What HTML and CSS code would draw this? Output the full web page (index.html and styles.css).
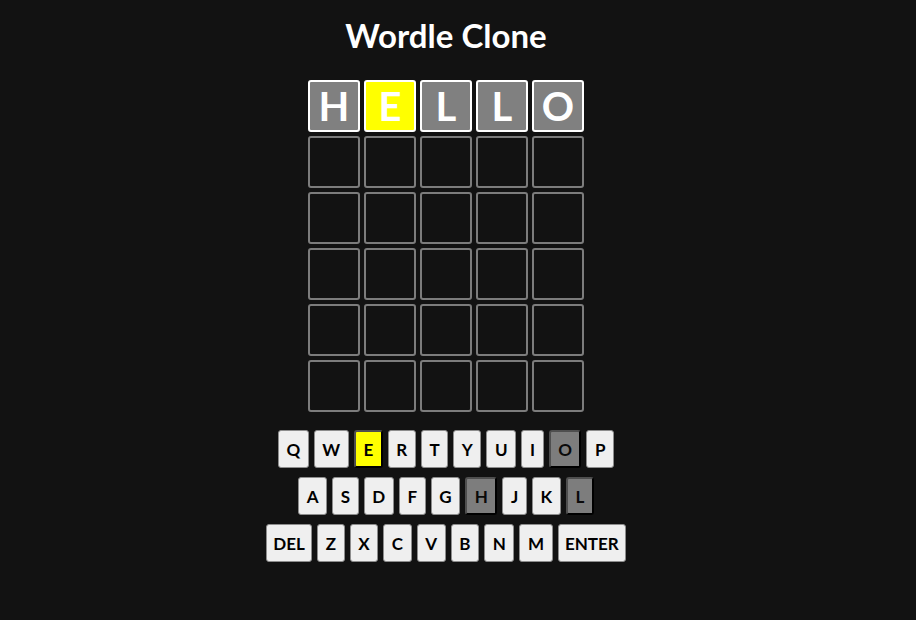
FILE: index.html
```html
<!DOCTYPE html>
<html lang="en">
<head>
<meta charset="utf-8">
<title>Wordle Clone</title>
<link rel="stylesheet" href="styles.css">
</head>
<body>
<main class="app">
  <h1 class="title">Wordle Clone</h1>

  <section class="board">
    <div class="row">
      <div class="tile tile-absent">H</div>
      <div class="tile tile-present">E</div>
      <div class="tile tile-absent">L</div>
      <div class="tile tile-absent">L</div>
      <div class="tile tile-absent">O</div>
    </div>
    <div class="row">
      <div class="tile"></div><div class="tile"></div><div class="tile"></div><div class="tile"></div><div class="tile"></div>
    </div>
    <div class="row">
      <div class="tile"></div><div class="tile"></div><div class="tile"></div><div class="tile"></div><div class="tile"></div>
    </div>
    <div class="row">
      <div class="tile"></div><div class="tile"></div><div class="tile"></div><div class="tile"></div><div class="tile"></div>
    </div>
    <div class="row">
      <div class="tile"></div><div class="tile"></div><div class="tile"></div><div class="tile"></div><div class="tile"></div>
    </div>
    <div class="row">
      <div class="tile"></div><div class="tile"></div><div class="tile"></div><div class="tile"></div><div class="tile"></div>
    </div>
  </section>

  <section class="keyboard">
    <div class="key-row">
      <button class="key">Q</button>
      <button class="key">W</button>
      <button class="key key-present">E</button>
      <button class="key">R</button>
      <button class="key">T</button>
      <button class="key">Y</button>
      <button class="key">U</button>
      <button class="key">I</button>
      <button class="key key-absent">O</button>
      <button class="key">P</button>
    </div>
    <div class="key-row">
      <button class="key">A</button>
      <button class="key">S</button>
      <button class="key">D</button>
      <button class="key">F</button>
      <button class="key">G</button>
      <button class="key key-absent">H</button>
      <button class="key">J</button>
      <button class="key">K</button>
      <button class="key key-absent">L</button>
    </div>
    <div class="key-row">
      <button class="key key-wide">DEL</button>
      <button class="key">Z</button>
      <button class="key">X</button>
      <button class="key">C</button>
      <button class="key">V</button>
      <button class="key">B</button>
      <button class="key">N</button>
      <button class="key">M</button>
      <button class="key key-wide">ENTER</button>
    </div>
  </section>
</main>
</body>
</html>
```

FILE: styles.css
```css
* {
  box-sizing: border-box;
}

body {
  margin: 0;
  background: #121212;
  color: #ffffff;
  font-family: Lato, "Open Sans", "DejaVu Sans", sans-serif;
}

.app {
  width: 892px;
  display: flex;
  flex-direction: column;
  align-items: center;
}

.title {
  margin: 16px 0 0;
  font-size: 33px;
  line-height: 38px;
  font-weight: 700;
}

/* game board: 6 guesses of 5 letters */
.board {
  margin-top: 26px;
  display: flex;
  flex-direction: column;
  gap: 4px;
}

.row {
  display: flex;
  gap: 4px;
}

.tile {
  width: 52px;
  height: 52px;
  border: 2px solid #7c7c7c;
  border-radius: 3px;
  display: flex;
  align-items: center;
  justify-content: center;
  font-size: 40px;
  font-weight: 700;
  color: #ffffff;
}

.tile-absent {
  background: #808080;
  border-color: #ffffff;
}

.tile-present {
  background: #ffff00;
  border-color: #ffffff;
}

/* on-screen keyboard */
.keyboard {
  margin-top: 18px;
  display: flex;
  flex-direction: column;
  align-items: center;
  gap: 9px;
}

.key-row {
  display: flex;
  gap: 5px;
}

.key {
  height: 38px;
  padding: 0 7.6px;
  border: 1px solid #8d8d8d;
  border-radius: 3px;
  background: #efefef;
  color: #000000;
  font-family: inherit;
  font-size: 17px;
  font-weight: 700;
}

.key-wide {
  padding: 0 6.4px;
}

.key-present {
  background: #ffff00;
  border: 2px outset #4f4f4f;
}

.key-absent {
  background: #7d7d7d;
  border: 2px outset #4f4f4f;
  color: #0a0a0a;
}
```
